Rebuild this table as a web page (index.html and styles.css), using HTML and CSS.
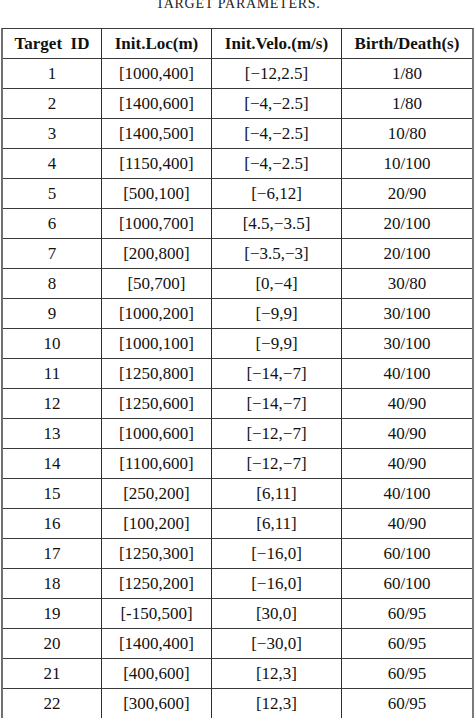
FILE: index.html
```html
<!DOCTYPE html>
<html>
<head>
<meta charset="utf-8">
<link rel="stylesheet" href="styles.css">
</head>
<body>
<div class="caption">TARGET PARAMETERS.</div>
<table class="params">
<colgroup><col class="c1"><col class="c2"><col class="c3"><col class="c4"></colgroup>
<thead>
<tr><th>Target&nbsp; ID</th><th>Init.Loc(m)</th><th>Init.Velo.(m/s)</th><th>Birth/Death(s)</th></tr>
</thead>
<tbody>
<tr><td>1</td><td>[1000,400]</td><td>[−12,2.5]</td><td>1/80</td></tr>
<tr><td>2</td><td>[1400,600]</td><td>[−4,−2.5]</td><td>1/80</td></tr>
<tr><td>3</td><td>[1400,500]</td><td>[−4,−2.5]</td><td>10/80</td></tr>
<tr><td>4</td><td>[1150,400]</td><td>[−4,−2.5]</td><td>10/100</td></tr>
<tr><td>5</td><td>[500,100]</td><td>[−6,12]</td><td>20/90</td></tr>
<tr><td>6</td><td>[1000,700]</td><td>[4.5,−3.5]</td><td>20/100</td></tr>
<tr><td>7</td><td>[200,800]</td><td>[−3.5,−3]</td><td>20/100</td></tr>
<tr><td>8</td><td>[50,700]</td><td>[0,−4]</td><td>30/80</td></tr>
<tr><td>9</td><td>[1000,200]</td><td>[−9,9]</td><td>30/100</td></tr>
<tr><td>10</td><td>[1000,100]</td><td>[−9,9]</td><td>30/100</td></tr>
<tr><td>11</td><td>[1250,800]</td><td>[−14,−7]</td><td>40/100</td></tr>
<tr><td>12</td><td>[1250,600]</td><td>[−14,−7]</td><td>40/90</td></tr>
<tr><td>13</td><td>[1000,600]</td><td>[−12,−7]</td><td>40/90</td></tr>
<tr><td>14</td><td>[1100,600]</td><td>[−12,−7]</td><td>40/90</td></tr>
<tr><td>15</td><td>[250,200]</td><td>[6,11]</td><td>40/100</td></tr>
<tr><td>16</td><td>[100,200]</td><td>[6,11]</td><td>40/90</td></tr>
<tr><td>17</td><td>[1250,300]</td><td>[−16,0]</td><td>60/100</td></tr>
<tr><td>18</td><td>[1250,200]</td><td>[−16,0]</td><td>60/100</td></tr>
<tr><td>19</td><td>[-150,500]</td><td>[30,0]</td><td>60/95</td></tr>
<tr><td>20</td><td>[1400,400]</td><td>[−30,0]</td><td>60/95</td></tr>
<tr><td>21</td><td>[400,600]</td><td>[12,3]</td><td>60/95</td></tr>
<tr><td>22</td><td>[300,600]</td><td>[12,3]</td><td>60/95</td></tr>
</tbody>
</table>
</body>
</html>
```
FILE: styles.css
```css
html, body {
  margin: 0;
  padding: 0;
  background: #ffffff;
}
body {
  font-family: "Liberation Serif", "Times New Roman", serif;
  color: #111111;
  overflow: hidden;
}
.caption {
  font-size: 14px;
  line-height: 14px;
  letter-spacing: 0.7px;
  text-align: center;
  margin-top: -3px;
  margin-bottom: 17px;
  padding-left: 2px;
  color: #222;
}
.params {
  margin-left: 1px;
  width: 473px;
  table-layout: fixed;
  border-collapse: separate;
  border-spacing: 0;
  border-left: 2px solid #707070;
  border-right: 2px solid #7a7a7a;
  border-top: 1px solid #3c3c3c;
  border-bottom: 2px solid #8a8a8a;
  font-size: 17px;
}
.c1 { width: 99px; }
.c2 { width: 110px; }
.c3 { width: 130px; }
.c4 { width: 130px; }
.params th, .params td {
  height: 29px;
  padding: 0;
  text-align: center;
  vertical-align: middle;
  border-right: 1px solid #2e2e2e;
  border-bottom: 1px solid #3a3a3a;
  white-space: nowrap;
  box-sizing: content-box;
}
.params th {
  font-weight: bold;
}
.params tr > :last-child {
  border-right: none;
}
.params tbody tr:last-child td {
  border-bottom: none;
}
```
